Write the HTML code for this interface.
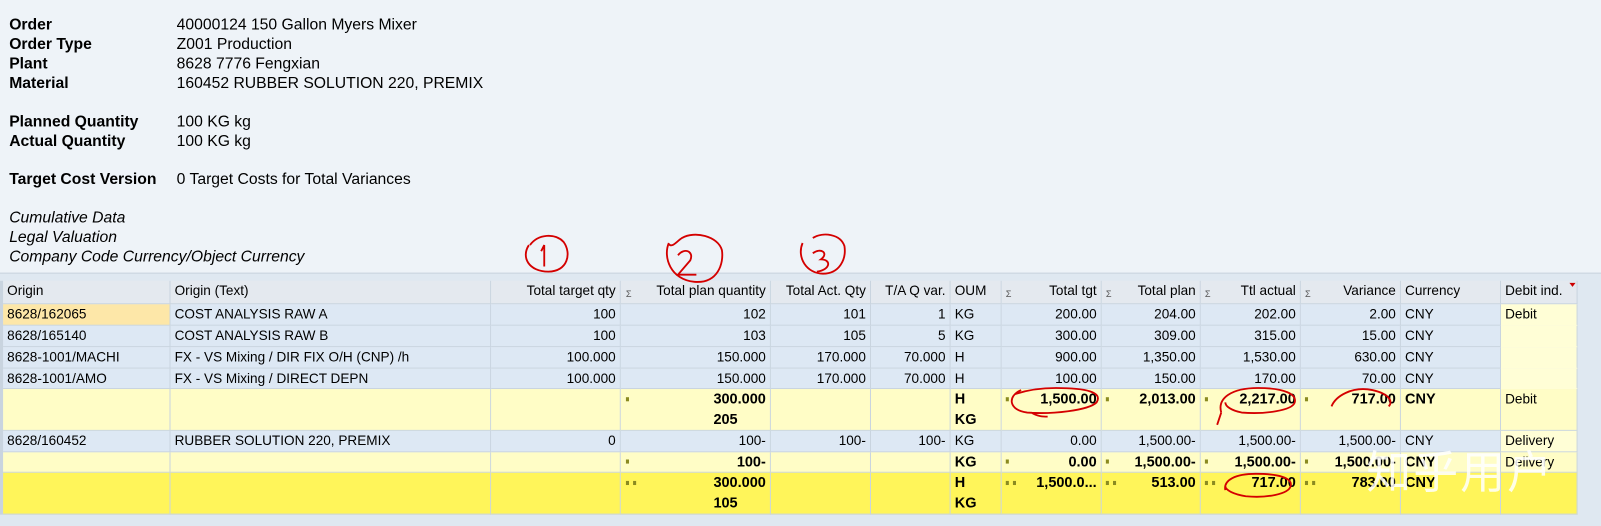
<!DOCTYPE html>
<html><head><meta charset="utf-8"><style>
*{margin:0;padding:0;box-sizing:border-box}
body{width:1601px;height:526px;background:#dfe8f1;font-family:"Liberation Sans Narrow","Liberation Sans",sans-serif;font-size:13.3px;color:#000;position:relative;overflow:hidden}
#w{position:absolute;left:0;top:0;width:1568px;height:515px;transform:scale(1.0211);transform-origin:0 0}
.top{position:absolute;left:0;top:0;width:1568px;height:268px;background:#eef3f8;border-bottom:1px solid #c5d0dc}
.t{position:absolute;white-space:nowrap;font-size:15.4px}
.b{font-weight:bold}
.i{font-style:italic}
.grid{position:absolute;left:3px;top:275px}
.c{position:absolute;white-space:nowrap;overflow:hidden;padding:0 4px;line-height:20px;height:21px;border-right:1px solid #c9d4df;border-bottom:1px solid #c9d4df}
.h{background:#e4e9ef}
.d{background:#dde8f4}
.s{background:#fffdc6;font-weight:bold;font-size:14.2px}
.g{background:#fff55a;font-weight:bold;font-size:14.2px}
.sig{position:absolute;font-size:9px;color:#555}
.dot{position:absolute;width:3px;height:4px;background:#8a8a20}
</style></head><body>
<div id="w">
<div class="top">
<div class="t b" style="left:9px;top:16px">Order</div><div class="t" style="left:173px;top:16px">40000124 150 Gallon Myers Mixer</div>
<div class="t b" style="left:9px;top:35px">Order Type</div><div class="t" style="left:173px;top:35px">Z001 Production</div>
<div class="t b" style="left:9px;top:54px">Plant</div><div class="t" style="left:173px;top:54px">8628 7776 Fengxian</div>
<div class="t b" style="left:9px;top:73px">Material</div><div class="t" style="left:173px;top:73px">160452 RUBBER SOLUTION 220, PREMIX</div>
<div class="t b" style="left:9px;top:111px">Planned Quantity</div><div class="t" style="left:173px;top:111px">100 KG kg</div>
<div class="t b" style="left:9px;top:130px">Actual Quantity</div><div class="t" style="left:173px;top:130px">100 KG kg</div>
<div class="t b" style="left:9px;top:167px">Target Cost Version</div><div class="t" style="left:173px;top:167px">0 Target Costs for Total Variances</div>
<div class="t i" style="left:9px;top:205px">Cumulative Data</div>
<div class="t i" style="left:9px;top:224px">Legal Valuation</div>
<div class="t i" style="left:9px;top:243px">Company Code Currency/Object Currency</div>
</div>
<div id="g"></div>
<div class="sig" style="left:613px;top:283px">Σ</div>
<div class="sig" style="left:985px;top:283px">Σ</div>
<div class="sig" style="left:1083px;top:283px">Σ</div>
<div class="sig" style="left:1180px;top:283px">Σ</div>
<div class="sig" style="left:1278px;top:283px">Σ</div>
<div style="position:absolute;left:1537px;top:277px;width:0;height:0;border-left:3px solid transparent;border-right:3px solid transparent;border-top:4px solid #c00"></div>
<div style="position:absolute;left:0;top:275px;width:3px;height:229px;background:#c9d4df"></div>
<div id="dots"></div>
<svg width="1568" height="515" style="position:absolute;left:0;top:0" fill="none" stroke="#d40000" stroke-width="1.8">
<path d="M518 240c-8 12 0 26 19 26s23-18 15-29c-8-9-25-8-33 3M530 246l3-6v21"/>
<path d="M655 238c-6 14 2 36 25 38s29-18 27-31c-4-14-27-19-39-12c-6 4-10 10-13 6M664 250c6-8 16-4 12 5l-12 14h18"/>
<path d="M786 238c-6 14 4 30 20 30s23-14 21-27c-4-12-21-14-31-8M796 248c8-6 16 0 8 6c10 0 10 10-4 12"/>
<path d="M1000 382c-14 6-12 20 6 22c24 2 60-2 68-10c6-10-10-14-40-14c-20 0-34 4-40 6M1010 404c6 4 12 4 16 4"/>
<path d="M1196 404c-4-14 10-24 36-24c26 0 38 6 36 14c-2 8-30 12-52 10c-10-2-16-6-16-10M1196 404l-4 12"/>
<path d="M1304 398c4-10 20-20 40-16c18 4 20 12 16 16"/>
<path d="M1200 480c-2-10 10-16 30-16c22 0 36 4 34 12c-2 8-24 12-44 10c-12-2-20-6-20-10"/>
</svg>
<div style="position:absolute;left:1338px;top:434px;font-family:'Noto Sans CJK SC',sans-serif;font-size:44px;line-height:50px;color:rgba(255,255,255,0.85);letter-spacing:2px">知乎用户</div>
</div>
<script>
var cols=[[0,164],[164,314],[478,127],[605,147],[752,98],[850,78],[928,50],[978,98],[1076,97],[1173,98],[1271,98],[1369,98],[1467,75]];
var right=[0,0,1,1,1,1,0,1,1,1,1,0,0];
var rows=[
['h',0,23,['Origin','Origin (Text)','Total target qty','Total plan quantity','Total Act. Qty','T/A Q var.','OUM','Total tgt','Total plan','Ttl actual','Variance','Currency','Debit ind.']],
['d',23,21,['8628/162065','COST ANALYSIS RAW A','100','102','101','1','KG','200.00','204.00','202.00','2.00','CNY','Debit']],
['d',44,21,['8628/165140','COST ANALYSIS RAW B','100','103','105','5','KG','300.00','309.00','315.00','15.00','CNY','']],
['d',65,21,['8628-1001/MACHI','FX - VS Mixing / DIR FIX O/H (CNP) /h','100.000','150.000','170.000','70.000','H','900.00','1,350.00','1,530.00','630.00','CNY','']],
['d',86,20,['8628-1001/AMO','FX - VS Mixing / DIRECT DEPN','100.000','150.000','170.000','70.000','H','100.00','150.00','170.00','70.00','CNY','']],
['s',106,41,['','','','300.000<br>205','','','H<br>KG','1,500.00','2,013.00','2,217.00','717.00','CNY','Debit']],
['d',147,21,['8628/160452','RUBBER SOLUTION 220, PREMIX','0','100-','100-','100-','KG','0.00','1,500.00-','1,500.00-','1,500.00-','CNY','Delivery']],
['s',168,20,['','','','100-','','','KG','0.00','1,500.00-','1,500.00-','1,500.00-','CNY','Delivery']],
['g',188,41,['','','','300.000<br>105','','','H<br>KG','1,500.0...','513.00','717.00','783.00','CNY','']]
];
var h='<div class="grid">';
rows.forEach(function(r){
 cols.forEach(function(c,i){
  var st='left:'+c[0]+'px;top:'+r[1]+'px;width:'+c[1]+'px;height:'+r[2]+'px;';
  if(r[0]=='d'&&i==0&&r[1]==23) st+='background:#fde7a8;';
  if(r[0]=='d'&&i==12) st+='background:#fffed6;'+(r[1]<106?'border-bottom-color:#fffed6;':'');
  if(r[0]!='h'&&i==12) st+='font-weight:normal;font-size:13.3px;';
  h+='<div class="c '+r[0]+'" style="'+st+'"><span style="position:absolute;'+(right[i]?'right:4px':'left:4px')+';top:0">'+r[3][i]+'</span></div>';
 });
});
h+='</div>';
document.getElementById('g').innerHTML=h;
var d='';
[[613,389],[985,389],[1083,389],[1180,389],[1278,389],[613,450],[985,450],[1083,450],[1180,450],[1278,450]].forEach(function(p){d+='<div class="dot" style="left:'+p[0]+'px;top:'+p[1]+'px"></div>';});
[613,985,1083,1180,1278].forEach(function(x){d+='<div class="dot" style="left:'+x+'px;top:471px"></div><div class="dot" style="left:'+(x+7)+'px;top:471px"></div>';});
document.getElementById('dots').innerHTML=d;
</script>
</body></html>
